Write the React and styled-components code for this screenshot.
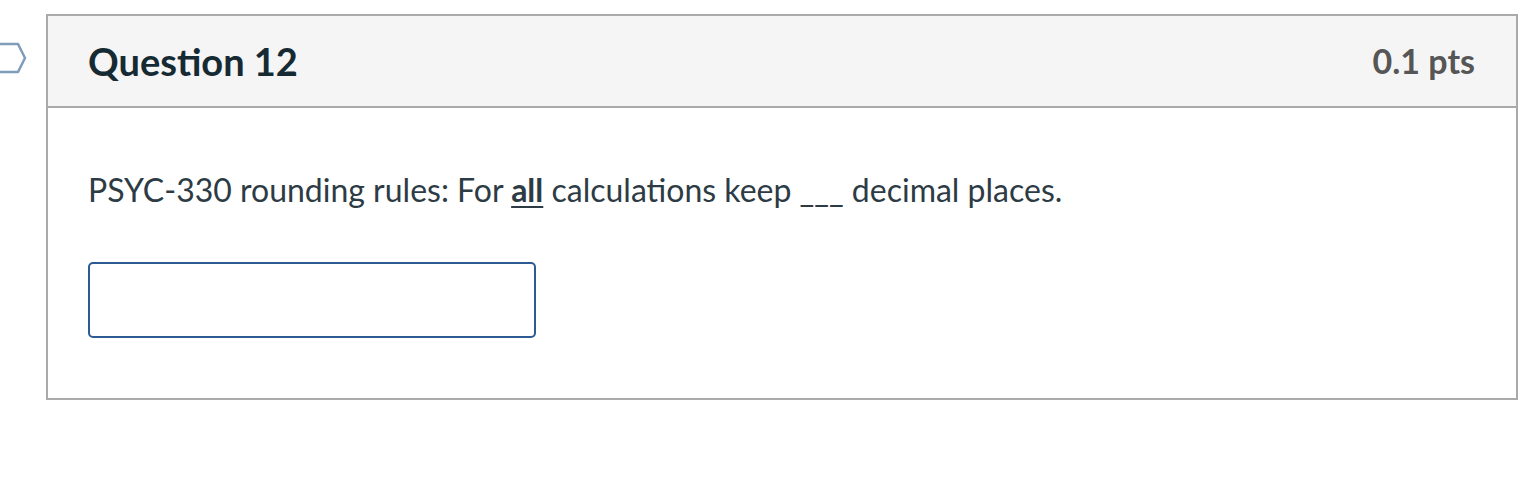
import React from 'react';
import styled, { createGlobalStyle } from 'styled-components';

const GlobalStyle = createGlobalStyle`
  body {
    margin: 0;
    background: #fff;
    font-family: Lato, "Noto Sans", sans-serif;
  }
`;

const Page = styled.div`
  position: relative;
  padding: 14px 0 0 46px;
`;

const Flag = styled.svg`
  position: absolute;
  left: -6px;
  top: 42px;
`;

const Card = styled.div`
  width: 1468px;
  border: 2px solid #aaaaaa;
  background: #fff;
`;

const Header = styled.div`
  height: 90px;
  display: flex;
  align-items: center;
  justify-content: space-between;
  padding: 0 41px 0 40px;
  background: #f5f5f5;
  border-bottom: 2px solid #aaaaaa;
`;

const Title = styled.h2`
  margin: 0;
  font-size: 38px;
  line-height: 44px;
  font-weight: 700;
  color: #162a33;
`;

const Points = styled.span`
  font-size: 34px;
  line-height: 44px;
  font-weight: 700;
  color: #565656;
`;

const Body = styled.div`
  padding: 63px 40px 60px;
`;

const Prompt = styled.p`
  margin: 0 0 53px;
  font-size: 32px;
  line-height: 38px;
  color: #2d3b45;

  strong {
    text-decoration: underline;
    text-underline-offset: 4px;
    text-decoration-thickness: 2px;
  }
`;

const Answer = styled.input`
  box-sizing: border-box;
  display: block;
  width: 448px;
  height: 76px;
  border: 2px solid #2c5a92;
  border-radius: 5px;
  background: #fff;
  font-family: inherit;
  font-size: 30px;
  padding: 0 12px;
  outline: none;
`;

export default function App() {
  return (
    <>
      <GlobalStyle />
      <Page>
        <Flag width="34" height="32" viewBox="0 0 34 32">
          <path
            d="M1 2 H24 L31 16 L24 30 H1"
            fill="#fff"
            stroke="#7f9cba"
            strokeWidth="2.5"
            strokeLinejoin="round"
          />
        </Flag>
        <Card>
          <Header>
            <Title>Question 12</Title>
            <Points>0.1 pts</Points>
          </Header>
          <Body>
            <Prompt>
              PSYC-330 rounding rules: For <strong>all</strong> calculations keep ___ decimal places.
            </Prompt>
            <Answer type="text" aria-label="Answer" />
          </Body>
        </Card>
      </Page>
    </>
  );
}
